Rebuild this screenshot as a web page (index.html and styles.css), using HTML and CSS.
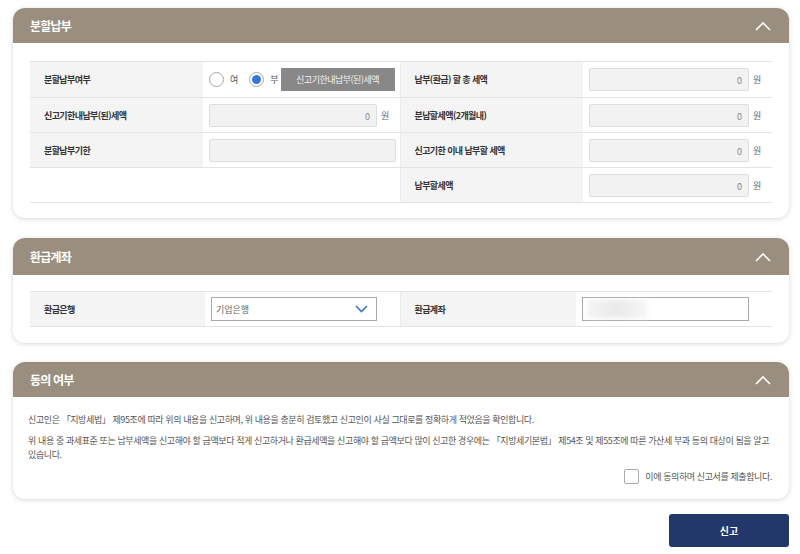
FILE: index.html
```html
<!DOCTYPE html>
<html lang="ko">
<head>
    <meta charset="UTF-8">
    <meta name="viewport" content="width=device-width, initial-scale=1.0">
    <title>분할납부</title>
    <link rel="stylesheet" href="styles.css">
</head>
<body>
    <div class="page">
        <!-- 분할납부 -->
        <div class="panel">
            <div class="panel-head">
                <h3>분할납부</h3>
                <svg class="fold" width="16" height="10" viewBox="0 0 16 10"><path d="M1 9 L8 2 L15 9" fill="none" stroke="#fff" stroke-width="1.6"/></svg>
            </div>
            <div class="panel-body">
                <table class="form-table t1">
                    <colgroup><col class="c1"><col class="c2"><col class="c3"><col class="c4"></colgroup>
                    <tr class="row-big">
                        <th>분할납부여부</th>
                        <td>
                            <div class="radios">
                                <span class="radio"></span><span class="radio-label">여</span>
                                <span class="radio checked"></span><span class="radio-label last">부</span>
                                <span class="gray-btn">신고기한내납부(된)세액</span>
                            </div>
                        </td>
                        <th>납부(환급) 할 총 세액</th>
                        <td><span class="amount wide">0</span><span class="won">원</span></td>
                    </tr>
                    <tr>
                        <th>신고기한내납부(된)세액</th>
                        <td><span class="amount">0</span><span class="won">원</span></td>
                        <th>분납할세액(2개월내)</th>
                        <td><span class="amount wide">0</span><span class="won">원</span></td>
                    </tr>
                    <tr>
                        <th>분할납부기한</th>
                        <td><span class="amount full"></span></td>
                        <th>신고기한 이내 납부할 세액</th>
                        <td><span class="amount wide">0</span><span class="won">원</span></td>
                    </tr>
                    <tr>
                        <th class="blank"></th>
                        <td></td>
                        <th>납부할세액</th>
                        <td><span class="amount wide">0</span><span class="won">원</span></td>
                    </tr>
                </table>
            </div>
        </div>

        <!-- 환급계좌 -->
        <div class="panel">
            <div class="panel-head tall">
                <h3>환급계좌</h3>
                <svg class="fold" width="16" height="10" viewBox="0 0 16 10"><path d="M1 9 L8 2 L15 9" fill="none" stroke="#fff" stroke-width="1.6"/></svg>
            </div>
            <div class="panel-body pb2">
                <table class="form-table t2">
                    <colgroup><col class="d1"><col class="d2"><col class="d3"><col class="d4"></colgroup>
                    <tr>
                        <th>환급은행</th>
                        <td>
                            <div class="select">
                                <span>기업은행</span>
                                <svg width="13" height="8" viewBox="0 0 13 8"><path d="M1 1 L6.5 6.5 L12 1" fill="none" stroke="#3d74c9" stroke-width="1.6"/></svg>
                            </div>
                        </td>
                        <th>환급계좌</th>
                        <td><div class="account"><span class="masked"></span></div></td>
                    </tr>
                </table>
            </div>
        </div>

        <!-- 동의 여부 -->
        <div class="panel">
            <div class="panel-head">
                <h3>동의 여부</h3>
                <svg class="fold" width="16" height="10" viewBox="0 0 16 10"><path d="M1 9 L8 2 L15 9" fill="none" stroke="#fff" stroke-width="1.6"/></svg>
            </div>
            <div class="panel-body agree">
                <p>신고인은 「지방세법」 제95조에 따라 위의 내용을 신고하며, 위 내용을 충분히 검토했고 신고인이 사실 그대로를 정확하게 적었음을 확인합니다.</p>
                <p>위 내용 중 과세표준 또는 납부세액을 신고해야 할 금액보다 적게 신고하거나 환급세액을 신고해야 할 금액보다 많이 신고한 경우에는 「지방세기본법」 제54조 및 제55조에 따른 가산세 부과 등의 대상이 됨을 알고 있습니다.</p>
                <label class="check-row">
                    <span class="checkbox"></span>
                    <span>이에 동의하며 신고서를 제출합니다.</span>
                </label>
            </div>
        </div>

        <div class="btn-area">
            <button type="button" class="submit">신고</button>
        </div>
    </div>
</body>
</html>
```

FILE: styles.css
```css
/* Base */
body {
    margin: 0;
    padding: 0;
    background: #fff;
    font-family: "Noto Sans CJK KR", "Noto Sans", sans-serif;
    color: #333;
}

.page {
    padding: 8px 11px 0 13px;
}

/* Panels */
.panel {
    background: #fff;
    border-radius: 12px;
    box-shadow: 0 1px 5px rgba(0, 0, 0, 0.16);
    margin-bottom: 20px;
    overflow: hidden;
}

.panel + .panel {
    margin-bottom: 19px;
}

.panel + .panel + .panel {
    margin-bottom: 0;
}

.panel-head {
    height: 35px;
    background: #9a8f7e;
    display: flex;
    align-items: center;
    justify-content: space-between;
    padding: 0 18px 0 17px;
}

.panel-head.tall {
    height: 37px;
}

.panel-head h3 {
    margin: 0;
    color: #fff;
    font-size: 12px;
    font-weight: bold;
    letter-spacing: -0.8px;
}

.panel-body {
    padding: 18px 17px 15px;
}

.panel-body.pb2 {
    padding: 16px 17px 16px;
}

/* Form table */
.form-table {
    width: 100%;
    border-collapse: collapse;
    table-layout: fixed;
    border-top: 1px solid #e3e3e3;
}

.t1 .c1 { width: 173px; }
.t1 .c2 { width: 197px; }
.t1 .c3 { width: 183px; }
.t1 .c4 { width: 189px; }

.t2 .d1 { width: 175px; }
.t2 .d2 { width: 195px; }
.t2 .d3 { width: 176px; }
.t2 .d4 { width: 196px; }

.form-table th,
.form-table td {
    height: 34px;
    border-bottom: 1px solid #e3e3e3;
    padding: 0;
    font-size: 9px;
}

.form-table .row-big th,
.form-table .row-big td {
    height: 35px;
}

.form-table th {
    background: #f4f4f4;
    text-align: left;
    padding-left: 14px;
    font-weight: bold;
    letter-spacing: -0.6px;
    color: #333;
}

.form-table th.blank {
    background: #fff;
}

.form-table td {
    padding-left: 6px;
    border-right: 1px solid #ececec;
    white-space: nowrap;
}

.form-table td:last-child {
    border-right: none;
}

/* Radios */
.radios {
    display: flex;
    align-items: center;
}

.radio {
    width: 13px;
    height: 13px;
    border: 1px solid #a8a8a8;
    border-radius: 50%;
    box-sizing: content-box;
    background: #fff;
    position: relative;
}

.radio.checked::after {
    content: "";
    position: absolute;
    left: 2px;
    top: 2px;
    width: 9px;
    height: 9px;
    border-radius: 50%;
    background: #3a76d6;
}

.radio-label {
    font-size: 9px;
    color: #555;
    margin: 0 11px 0 6px;
}

.radio-label.last {
    margin-right: 0;
}

.gray-btn {
    margin-left: 2px;
    width: 114px;
    height: 23px;
    background: #888;
    color: #f2f2f2;
    font-size: 9px;
    letter-spacing: -0.5px;
    display: flex;
    align-items: center;
    justify-content: center;
    border-radius: 1px;
}

/* Amount fields */
.amount {
    display: inline-block;
    vertical-align: middle;
    width: 168px;
    height: 23px;
    line-height: 23px;
    box-sizing: border-box;
    background: #f2f2f2;
    border: 1px solid #dedede;
    border-radius: 2px;
    text-align: right;
    padding-right: 6px;
    font-size: 9px;
    color: #888;
}

.amount.wide {
    width: 160px;
}

.amount.full {
    width: 187px;
}

.won {
    display: inline-block;
    vertical-align: middle;
    margin-left: 4px;
    font-size: 9px;
    color: #666;
}

/* Select & account */
.select {
    width: 166px;
    height: 24px;
    box-sizing: border-box;
    border: 1px solid #a9a9a9;
    display: flex;
    align-items: center;
    justify-content: space-between;
    padding: 0 8px 0 4px;
    font-size: 9px;
    color: #666;
}

.account {
    width: 167px;
    height: 24px;
    box-sizing: border-box;
    border: 1px solid #a9a9a9;
    display: flex;
    align-items: center;
    padding-left: 4px;
}

.masked {
    width: 60px;
    height: 18px;
    background: linear-gradient(90deg, #f4f4f4, #eaeaea 50%, #f6f6f6);
    filter: blur(2px);
}

/* Agreement */
.agree {
    padding: 16px 17px 15px 15px;
}

.agree p {
    margin: 0 0 7px;
    font-size: 9px;
    line-height: 14px;
    color: #555;
    letter-spacing: -0.4px;
}

.check-row {
    display: flex;
    justify-content: flex-end;
    align-items: center;
    margin-top: 3px;
    font-size: 9px;
    color: #555;
    letter-spacing: -0.4px;
}

.checkbox {
    width: 13px;
    height: 13px;
    border: 1px solid #aaa;
    border-radius: 2px;
    margin-right: 6px;
    background: #fff;
}

/* Submit */
.btn-area {
    display: flex;
    justify-content: flex-end;
    padding-top: 15px;
}

.submit {
    width: 120px;
    height: 33px;
    background: #23386a;
    color: #fff;
    border: none;
    border-radius: 3px;
    font-family: inherit;
    font-size: 10px;
    font-weight: bold;
    cursor: pointer;
}
```
